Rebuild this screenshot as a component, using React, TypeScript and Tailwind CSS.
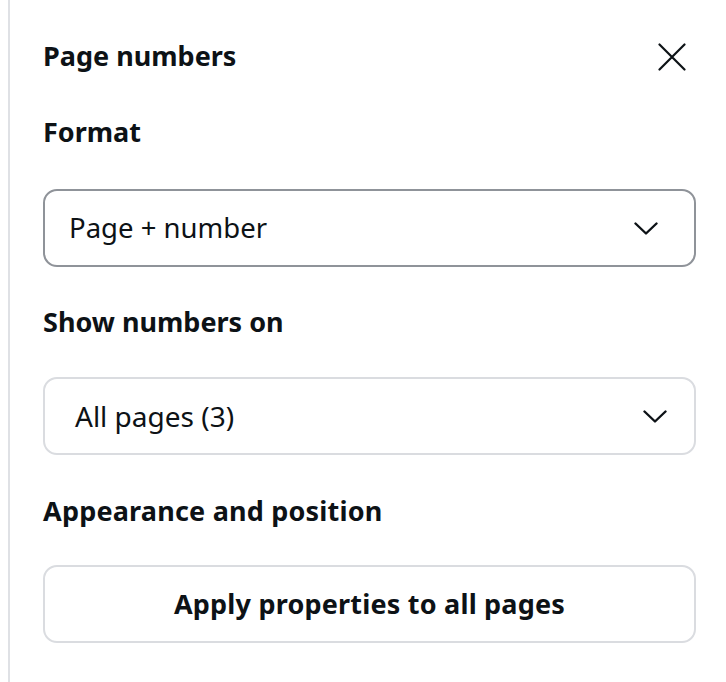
import React from "react";

const Chevron = () => (
  <svg width="24" height="13" viewBox="0 0 24 13" fill="none">
    <path d="M1.5 1.5 12 11.5 22.5 1.5" stroke="#0d1216" strokeWidth="2.4" strokeLinecap="round" strokeLinejoin="round" />
  </svg>
);

const Close = () => (
  <svg width="28" height="28" viewBox="0 0 28 28" fill="none">
    <path d="M1.5 1.5 26.5 26.5 M26.5 1.5 1.5 26.5" stroke="#0d1216" strokeWidth="2.2" strokeLinecap="round" />
  </svg>
);

export default function App() {
  return (
    <div className="w-[726px] h-[682px] bg-white font-['Noto_Sans',sans-serif] text-[#0d1216] pl-2">
      <div className="h-full border-l-2 border-[#dfe1e5] pl-[33px] pr-[30px]">
        <div className="flex items-center justify-between pt-[38px] h-[74px]">
          <h1 className="text-[27px] leading-[36px] font-bold">Page numbers</h1>
          <button className="mr-[10px] mt-[1px]">
            <Close />
          </button>
        </div>

        <div className="mt-[42px] text-[27px] leading-[32px] font-bold">Format</div>
        <div className="mt-[41px] h-[78px] rounded-[14px] border-2 border-[#8f9399] flex items-center justify-between pl-[24px] pr-[36px]">
          <span className="text-[27.5px] leading-[34px]">Page + number</span>
          <Chevron />
        </div>

        <div className="mt-[39px] text-[27px] leading-[32px] font-bold">Show numbers on</div>
        <div className="mt-[39px] h-[78px] rounded-[14px] border-2 border-[#dadce0] flex items-center justify-between pl-[30px] pr-[27px]">
          <span className="text-[28px] leading-[34px]">All pages (3)</span>
          <Chevron />
        </div>

        <div className="mt-[40px] text-[27px] leading-[32px] font-bold tracking-[0.2px]">Appearance and position</div>
        <button className="mt-[38px] w-full h-[78px] rounded-[14px] border-2 border-[#dadce0] flex items-center justify-center text-[27px] leading-[34px] font-bold tracking-[0.2px]">
          Apply properties to all pages
        </button>
      </div>
    </div>
  );
}
